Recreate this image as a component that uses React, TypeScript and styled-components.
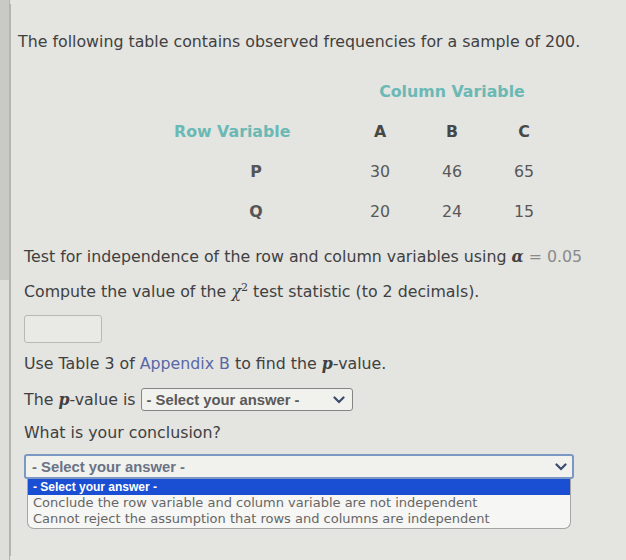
import React from "react";
import styled, { createGlobalStyle } from "styled-components";

const GlobalStyle = createGlobalStyle`
  html, body {
    margin: 0;
    padding: 0;
    background: #e4e4e1;
  }
  body {
    font-family: "DejaVu Sans", Verdana, sans-serif;
    color: #404040;
  }
`;

const columns = ["A", "B", "C"];
const rows = [
  { label: "P", values: [30, 46, 65] },
  { label: "Q", values: [20, 24, 15] },
];

const options = [
  "- Select your answer -",
  "Conclude the row variable and column variable are not independent",
  "Cannot reject the assumption that rows and columns are independent",
];

const Chevron = () => (
  <svg width="12" height="8" viewBox="0 0 12 8">
    <path d="M1.5 1.5 L6 6 L10.5 1.5" fill="none" stroke="#3a4a6a" strokeWidth="2.2" strokeLinecap="round" />
  </svg>
);

export default function App() {
  return (
    <>
      <GlobalStyle />
      <Page>
        <Gutter />
        <Content>
          <Intro>The following table contains observed frequencies for a sample of 200.</Intro>

          <Table>
            <GroupHead>Column Variable</GroupHead>
            <RowHead>Row Variable</RowHead>
            {columns.map((c) => (
              <ColHead key={c}>{c}</ColHead>
            ))}
            {rows.map((r) => (
              <React.Fragment key={r.label}>
                <RowLabel>{r.label}</RowLabel>
                {r.values.map((v, i) => (
                  <Cell key={i}>{v}</Cell>
                ))}
              </React.Fragment>
            ))}
          </Table>

          <Para>
            Test for independence of the row and column variables using <Alpha>α</Alpha>
            <Light> = 0.05</Light>
          </Para>
          <Para $top={17}>
            Compute the value of the <Chi>χ<sup>2</sup></Chi> test statistic (to 2 decimals).
          </Para>

          <AnswerBox />

          <Para $top={12}>
            Use Table 3 of <Link>Appendix B</Link> to find the <PVar>p</PVar>-value.
          </Para>

          <InlineRow>
            <span>
              The <PVar>p</PVar>-value is
            </span>
            <SmallSelect>
              <span>- Select your answer -</span>
              <Chevron />
            </SmallSelect>
          </InlineRow>

          <Para $top={13}>What is your conclusion?</Para>

          <Dropdown>
            <WideSelect>
              <span>- Select your answer -</span>
              <Chevron />
            </WideSelect>
            <OptionList>
              {options.map((o, i) => (
                <Option key={o} $active={i === 0}>
                  {o}
                </Option>
              ))}
            </OptionList>
          </Dropdown>
        </Content>
      </Page>
    </>
  );
}

const Page = styled.div`
  display: flex;
  min-height: 560px;
`;

const Gutter = styled.div`
  width: 9px;
  margin-right: 5px;
  background: linear-gradient(#c9c9c6 0 50%, #dededb 50%);
  border-right: 1px solid #b3b3b0;
  box-shadow: 5px 0 0 -4px #b3b3b0;
`;

const Content = styled.div`
  flex: 1;
  padding: 33px 0 0 3px;
  font-size: 15.8px;
  line-height: 18px;
`;

const Intro = styled.p`
  margin: 0;
`;

const Table = styled.div`
  display: grid;
  grid-template-columns: 184px 72px 72px 72px;
  grid-auto-rows: 40px;
  margin: 21px 0 0 142px;
  align-items: center;
`;

const GroupHead = styled.div`
  grid-column: 2 / 5;
  text-align: center;
  color: #6ab9b4;
  font-weight: bold;
`;

const RowHead = styled.div`
  padding-left: 14px;
  color: #6ab9b4;
  font-weight: bold;
`;

const ColHead = styled.div`
  text-align: center;
  font-weight: bold;
  color: #474747;
`;

const RowLabel = styled.div`
  text-align: center;
  padding-left: 8px;
  font-weight: bold;
  color: #555;
`;

const Cell = styled.div`
  text-align: center;
  color: #585858;
`;

const Para = styled.p<{ $top?: number }>`
  margin: ${(p) => p.$top ?? 16}px 0 0 6px;
`;

const Alpha = styled.span`
  font-family: "DejaVu Serif", serif;
  font-style: italic;
  font-weight: bold;
`;

const Light = styled.span`
  color: #8a8a8a;
`;

const Chi = styled.span`
  font-family: "DejaVu Serif", serif;
  font-style: italic;
  sup {
    font-size: 11px;
    font-style: normal;
    line-height: 0;
  }
`;

const PVar = styled.span`
  font-family: "DejaVu Serif", serif;
  font-style: italic;
  font-weight: bold;
`;

const Link = styled.span`
  color: #5868a6;
`;

const AnswerBox = styled.div`
  width: 76px;
  height: 26px;
  margin: 14px 0 0 6px;
  border: 1px solid #b8b8b5;
  border-radius: 3px;
  background: #e9e9e6;
`;

const InlineRow = styled.div`
  display: flex;
  align-items: center;
  gap: 5px;
  margin: 15px 0 0 6px;
`;

const SelectBase = styled.div`
  display: flex;
  align-items: center;
  justify-content: space-between;
  box-sizing: border-box;
  background: #f1f1ee;
  font-family: "Liberation Sans", Arial, sans-serif;
  font-weight: bold;
  font-size: 14.8px;
  color: #5a5a5a;
`;

const SmallSelect = styled(SelectBase)`
  width: 212px;
  height: 23px;
  padding: 0 7px 0 5px;
  border: 1px solid #858585;
  border-radius: 3px;
`;

const Dropdown = styled.div`
  margin: 12px 0 0 6px;
  width: 550px;
`;

const WideSelect = styled(SelectBase)`
  height: 25px;
  padding: 0 5px 0 6px;
  border: 2px solid #7b98c4;
  border-radius: 3px;
  color: #6a7384;
`;

const OptionList = styled.div`
  margin: 0 3px;
  background: #f6f6f4;
  border: 1px solid #a5a5a5;
  border-top: none;
  border-radius: 0 0 7px 7px;
  padding-bottom: 1px;
  overflow: hidden;
`;

const Option = styled.div<{ $active?: boolean }>`
  height: 16px;
  line-height: 16px;
  padding-left: 5px;
  font-family: ${(p) => (p.$active ? '"Liberation Sans", Arial, sans-serif' : "inherit")};
  font-size: ${(p) => (p.$active ? "12px" : "13px")};
  font-weight: ${(p) => (p.$active ? "bold" : "normal")};
  color: ${(p) => (p.$active ? "#fff" : "#666")};
  background: ${(p) => (p.$active ? "#1a4fd4" : "transparent")};
`;
